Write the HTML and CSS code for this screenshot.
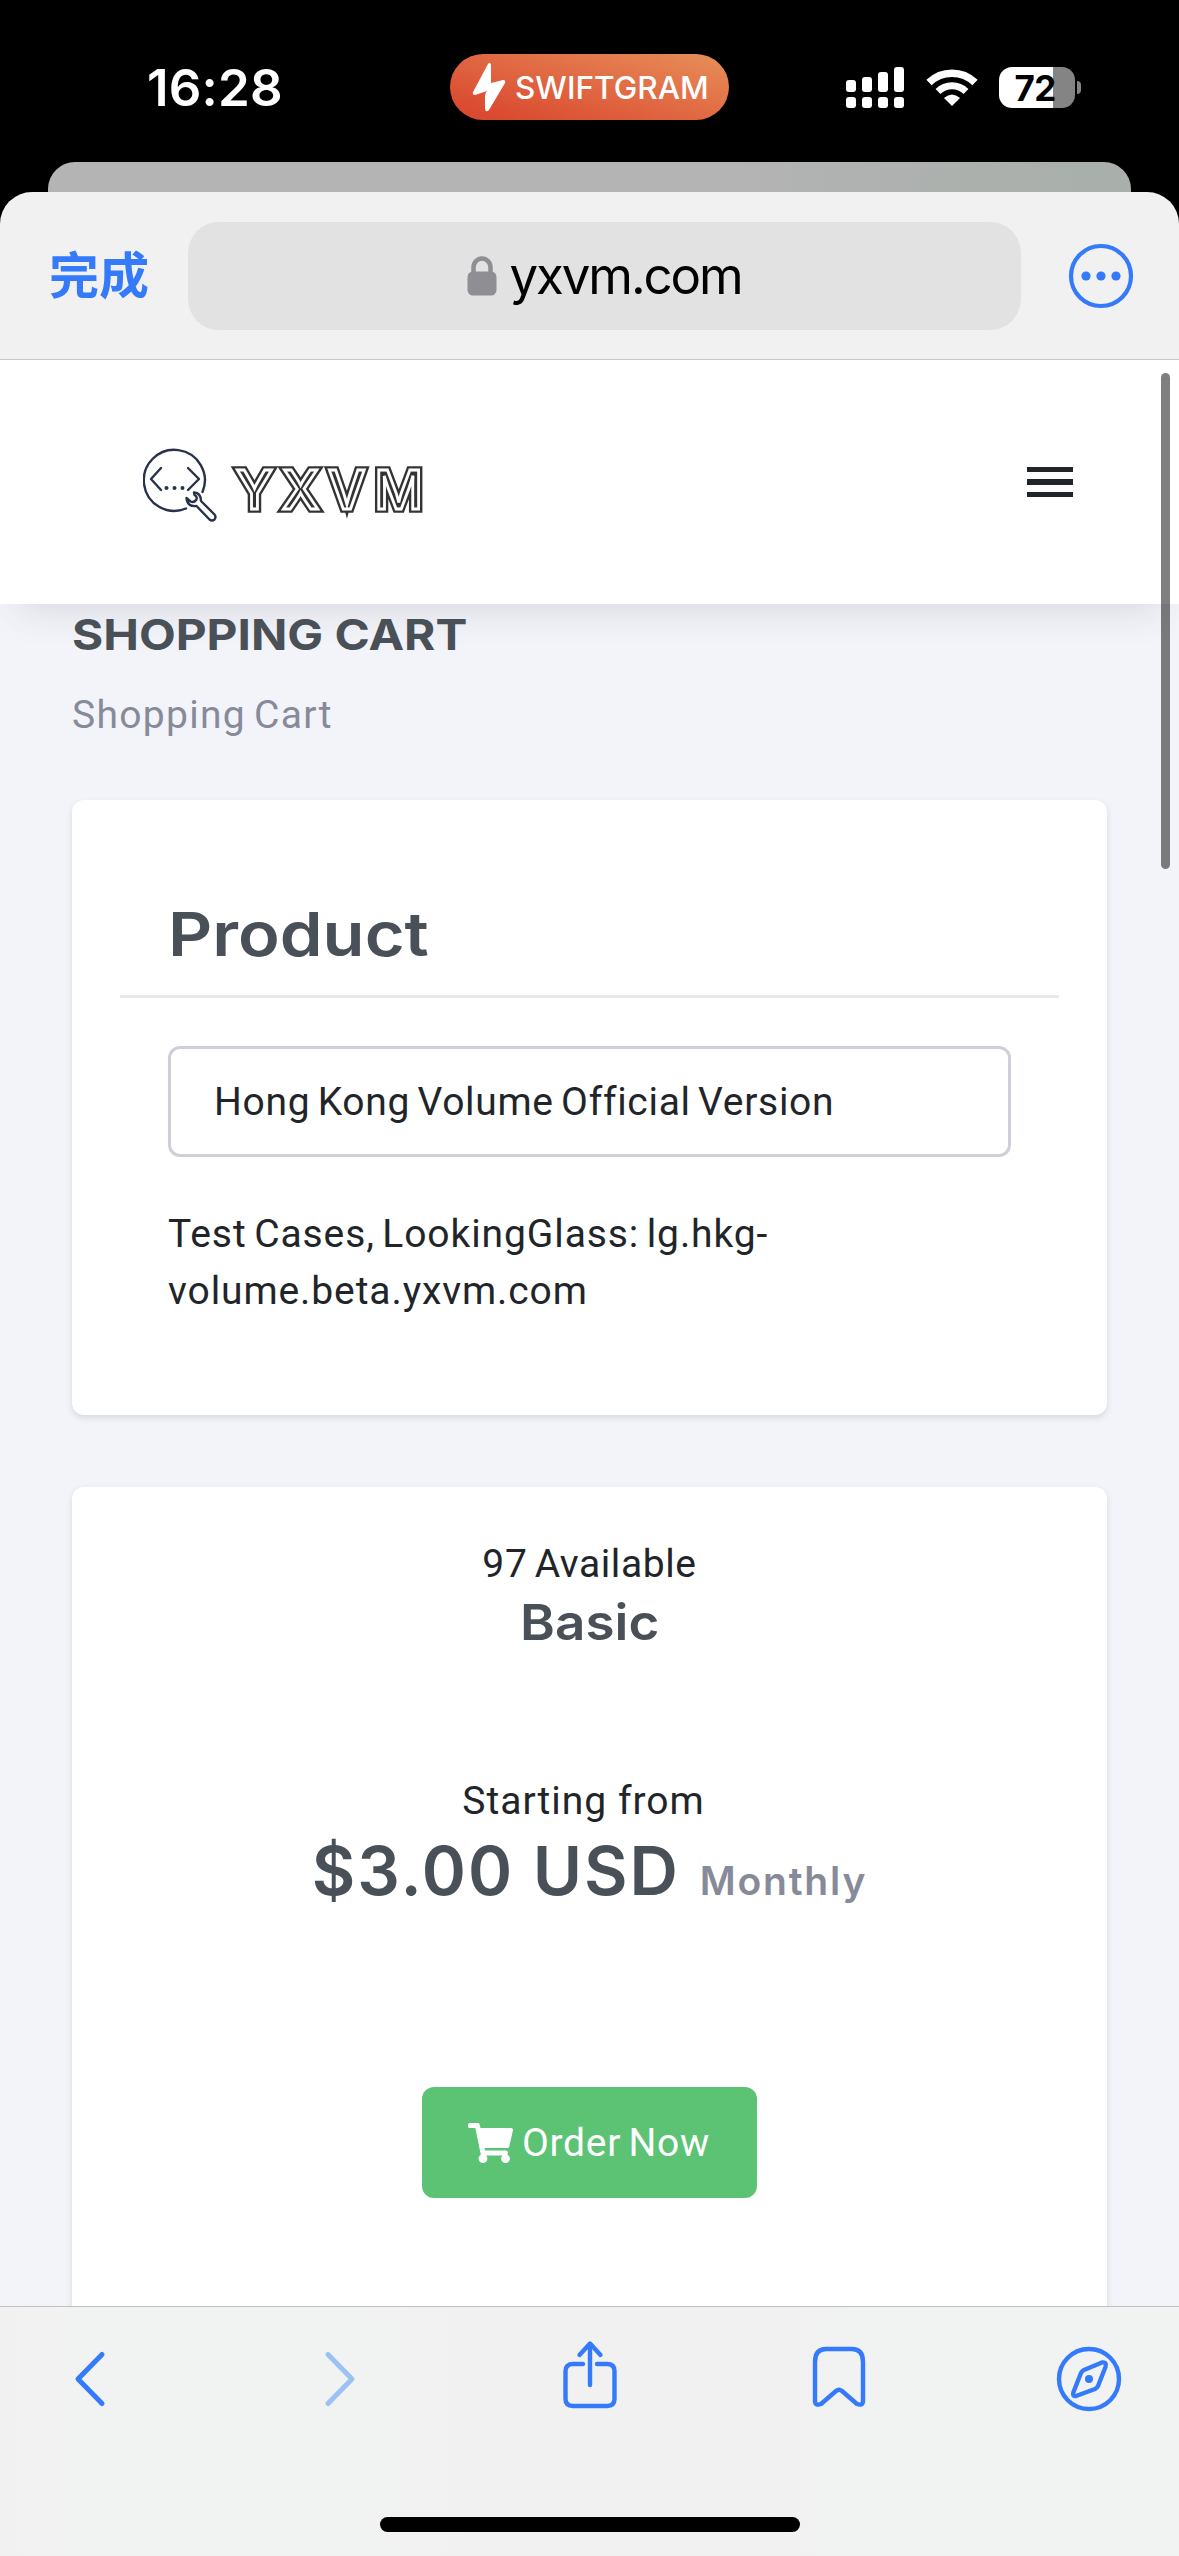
FILE: index.html
```
<!DOCTYPE html>
<html lang="zh-CN">
  <head>
    <meta charset="UTF-8">
    <title>Shopping Cart - YXVM</title>
    <link rel="stylesheet" href="styles.css">
  </head>
  <body>
    <div class="status">
      <div class="time">16:28</div>
      <div class="pill">
        <svg width="36" height="52" viewBox="0 0 36 52"><path d="M17 3L2 31Q1 34 4 34L16 30Q14 32 14 35L14 48Q15 52 18 49L34 22Q35 19 32 19L20 22L20 4Q19 0 17 3Z" fill="#fff"/></svg>
        <span>SWIFTGRAM</span>
      </div>
      <div class="status-icons">
        <svg class="signal" width="58" height="42" viewBox="0 0 58 42" fill="#fff">
          <rect x="0" y="13" width="10" height="12" rx="3"/>
          <rect x="16" y="10" width="10" height="15" rx="3"/>
          <rect x="32" y="5" width="10" height="20" rx="3"/>
          <rect x="48" y="0" width="10" height="25" rx="3"/>
          <rect x="0" y="30" width="10" height="11" rx="3"/>
          <rect x="16" y="30" width="10" height="11" rx="3"/>
          <rect x="32" y="30" width="10" height="11" rx="3"/>
          <rect x="48" y="30" width="10" height="11" rx="3"/>
        </svg>
        <svg class="wifi" width="52" height="38" viewBox="0 0 52 38">
          <path d="M3 13.5A33 33 0 0 1 49 13.5" fill="none" stroke="#fff" stroke-width="7.5"/>
          <path d="M12 22.5A20 20 0 0 1 40 22.5" fill="none" stroke="#fff" stroke-width="7"/>
          <path d="M26 37L18 29Q26 22 34 29Z" fill="#fff"/>
        </svg>
        <div class="battery"><span>72</span></div>
        <div class="battery-tip"></div>
      </div>
    </div>
    <div class="back-sheet"></div>

    <div class="sheet">
      <div class="browser-bar">
        <div class="done">完成</div>
        <div class="address">
          <svg width="30" height="40" viewBox="0 0 30 40"><path d="M6.500 19V11.500a8.500 9 0 0 1 17 0V19" fill="none" stroke="#8e8e93" stroke-width="4.500"/><rect x="0.500" y="15.500" width="29" height="24" rx="5.500" fill="#8e8e93"/></svg>
          <span>yxvm.com</span>
        </div>
        <svg class="more" width="66" height="66" viewBox="0 0 66 66"><circle cx="33" cy="33" r="30" fill="none" stroke="#347afa" stroke-width="4.200"/><g fill="#347afa"><circle cx="18" cy="33" r="4.600"/><circle cx="33" cy="33" r="4.600"/><circle cx="48" cy="33" r="4.600"/></g></svg>
      </div>

      <div class="page">
        <div class="topnav">
          <svg class="logo-icon" width="76" height="76" viewBox="0 0 76 76" fill="none" stroke="#28324a" stroke-width="2.400" stroke-linecap="round" stroke-linejoin="round">
            <path d="M43 61.500A30.500 30.500 0 1 1 59.500 45"/>
            <path d="M18 21L8 32L18 43M45 21L56 32L45 43"/>
            <g fill="#28324a" stroke="none"><circle cx="23.500" cy="41" r="2"/><circle cx="31.500" cy="41" r="2"/><circle cx="39.500" cy="41" r="2"/></g>
            <path d="M51 45.500Q58 46 58 54L71.500 67.500Q73.500 70 71.500 72.500Q69 74.500 66.500 72.500L53.500 59Q44 60 43.500 51L47.500 54.500Q51 56 53 53Q55 50 51.500 48Z"/>
          </svg>
          <div class="logo-text">YXVM</div>
          <div class="menu"><i></i><i></i><i></i></div>
        </div>

        <div class="content">
          <h1 class="title">SHOPPING CART</h1>
          <div class="crumb">Shopping Cart</div>

          <div class="card product">
            <div class="product-head"><h2>Product</h2></div>
            <div class="product-body">
              <div class="select">Hong Kong Volume Official Version</div>
              <p>Test Cases, LookingGlass: lg.hkg-<br>volume.beta.yxvm.com</p>
            </div>
          </div>

          <div class="card plan">
            <div class="stock">97 Available</div>
            <h3>Basic</h3>
            <div class="from">Starting from</div>
            <div class="price"><span class="amount">$3.00 USD</span><span class="cycle">Monthly</span></div>
            <div class="order">
              <svg width="45" height="40" viewBox="0 0 576 512"><path fill="#fff" d="M528.120 301.319l47.273-208C578.806 78.301 567.391 64 551.990 64H159.208l-9.166-44.810C147.758 8.021 137.930 0 126.529 0H24C10.745 0 0 10.745 0 24v16c0 13.255 10.745 24 24 24h69.883l70.248 343.435C147.325 417.100 136 435.222 136 456c0 30.928 25.072 56 56 56s56-25.072 56-56c0-15.674-6.447-29.835-16.824-40h209.647C430.447 426.165 424 440.326 424 456c0 30.928 25.072 56 56 56s56-25.072 56-56c0-22.172-12.888-41.332-31.579-50.405l5.517-24.276c3.413-15.018-8.002-29.319-23.403-29.319H218.117l-6.545-32h293.145c11.206 0 20.920-7.754 23.403-18.681z"/></svg>
              <span>Order Now</span>
            </div>
          </div>
        </div>
        <div class="scrollbar"></div>
      </div>

      <div class="toolbar">
        <div class="tools">
          <svg class="arrow" width="66" height="80" viewBox="0 0 66 80"><path d="M45 15.500L21 40L45 64.500"/></svg>
          <svg class="arrow disabled" width="66" height="80" viewBox="0 0 66 80"><path d="M21 15.500L45 40L21 64.500"/></svg>
          <svg width="66" height="80" viewBox="0 0 66 80"><path d="M26 25H16Q8.500 25 8.500 32V60Q8.500 67 16 67H50Q57.500 67 57.500 60V32Q57.500 25 50 25H40M33 46V5M22.500 16L33 4.500L43.500 16"/></svg>
          <svg width="66" height="80" viewBox="0 0 66 80"><path d="M9 23Q9 10 20 10H46Q57 10 57 23V62Q57 67 51 65L36 52Q33 49.500 30 52L15 65Q9 67 9 62Z"/></svg>
          <svg width="66" height="80" viewBox="0 0 66 80"><circle cx="33" cy="40" r="30"/><path d="M28 31L46 23.500Q51 22.500 49.500 28L42 47Q41 49 39 50L20 57Q16 57.500 17.500 53L25 34Q26 32 28 31Z"/><circle cx="33" cy="40" r="4" fill="#347afa" stroke="none"/></svg>
        </div>
        <div class="home-bar"></div>
      </div>
    </div>
  </body>
</html>
```
FILE: styles.css
```
* { box-sizing: border-box; }
body {
  margin: 0;
  width: 1179px;
  height: 2556px;
  overflow: hidden;
  background: #000;
  color: #212529;
  font-family: Roboto, "Liberation Sans", sans-serif;
  font-size: 39px;
}
h1, h2, h3, p { margin: 0; }
svg { display: block; flex: none; }

/* status bar */
.status {
  position: relative;
  height: 162px;
  font-family: Inter, "Liberation Sans", sans-serif;
  color: #fff;
}
.time {
  position: absolute;
  left: 147px;
  top: 58px;
  line-height: 60px;
  font-size: 51px;
  font-weight: 600;
  letter-spacing: 0.2px;
}
.pill {
  position: absolute;
  left: 450px;
  top: 54px;
  width: 279px;
  height: 66px;
  padding-left: 21px;
  display: flex;
  align-items: center;
  border-radius: 33px;
  background: linear-gradient(15deg, #da4930 10%, #e78b57 95%);
}
.pill span {
  margin-left: 8px;
  font-size: 31.5px;
  font-weight: 500;
}
.status-icons {
  position: absolute;
  left: 846px;
  top: 67px;
  height: 41px;
  display: flex;
  align-items: center;
}
.wifi { margin-left: 22px; }
.battery {
  width: 76px;
  height: 41px;
  margin-left: 21px;
  padding-right: 4px;
  border-radius: 13px;
  background: linear-gradient(90deg, #fff 54px, #848484 54px);
  color: #000;
  font-size: 35px;
  line-height: 42px;
  font-weight: 700;
  letter-spacing: -0.6px;
  text-align: center;
}
.battery-tip {
  width: 4px;
  height: 13px;
  margin-left: 2px;
  border-radius: 0 4px 4px 0;
  background: #848484;
}

.back-sheet {
  height: 30px;
  margin: 0 48px;
  border-radius: 27px 27px 0 0;
  background: linear-gradient(90deg, #b4b4b4 60%, #a9afab 95%);
}
.sheet {
  height: 2364px;
  display: flex;
  flex-direction: column;
  border-radius: 32px 32px 0 0;
  background: #f1f1f1;
  overflow: hidden;
}
.browser-bar {
  height: 168px;
  padding: 0 45px 0 49px;
  display: flex;
  align-items: center;
  border-bottom: 1px solid #c5c5ca;
}
.done {
  width: 139px;
  font-family: Inter, "Noto Sans CJK SC", sans-serif;
  font-size: 50px;
  line-height: 60px;
  font-weight: 700;
  color: #347afa;
}
.address {
  width: 833px;
  height: 108px;
  display: flex;
  align-items: center;
  justify-content: center;
  gap: 12px;
  border-radius: 31px;
  background: #e2e2e2;
  color: #000;
  font-family: Inter, "Liberation Sans", sans-serif;
  font-size: 51px;
  letter-spacing: -2.1px;
}
.more { margin-left: 47px; }

/* shop page */
.page {
  position: relative;
  height: 1946px;
  background: #f3f4f9;
  overflow: hidden;
}
.topnav {
  position: relative;
  height: 244px;
  padding: 0 106px 0 143px;
  display: flex;
  align-items: center;
  background: #fff;
  box-shadow: 0 24px 36px -18px rgba(60,65,75,0.14);
}
.logo-icon { margin-top: 5px; }
/* inline lettering: dark outline, white band, dark core */
.logo-text {
  position: relative;
  margin: 15px 0 0 17px;
  font-family: Inter, sans-serif;
  font-size: 53px;
  line-height: 70px;
  font-weight: 500;
  color: #333;
  letter-spacing: 9px;
  -webkit-text-stroke: 7.6px #333;
}
.logo-text::after {
  content: "YXVM";
  position: absolute;
  left: 0;
  top: 0;
  -webkit-text-stroke: 2.8px #fff;
}
.menu {
  margin-left: auto;
  display: grid;
  gap: 7px;
}
.menu i {
  width: 46px;
  height: 5.5px;
  background: #212529;
}
.content { padding: 0 72px; }
.title {
  padding-top: 6px;
  font-family: Inter, sans-serif;
  font-size: 43px;
  line-height: 49px;
  font-weight: 700;
  color: #495057;
  transform: scaleX(1.11);
  transform-origin: left;
}
.crumb {
  padding-top: 28px;
  line-height: 57px;
  color: #878a99;
  letter-spacing: 1.3px;
  word-spacing: -3px;
}
.card {
  border-radius: 12px;
  background: #fff;
  box-shadow: 0 3px 6px rgba(56,65,74,0.15);
}
.product {
  height: 615px;
  margin-top: 56px;
  padding: 48px;
}
.product-head {
  height: 150px;
  padding: 50px 48px 0;
  border-bottom: 3px solid #e9e9e9;
}
.product h2 {
  font-family: Inter, sans-serif;
  font-size: 61px;
  line-height: 72px;
  font-weight: 600;
  color: #495057;
  transform: scaleX(1.125);
  transform-origin: left;
}
.product-body { padding: 48px; }
.select {
  height: 111px;
  padding: 0 43px;
  border: 3px solid #ced0d9;
  border-radius: 12px;
  line-height: 107px;
  letter-spacing: 0.7px;
  word-spacing: -3px;
}
.product p {
  padding-top: 49px;
  line-height: 57px;
  letter-spacing: 0.9px;
  word-spacing: -3px;
}
.plan {
  height: 900px;
  margin-top: 72px;
  padding-top: 49px;
  display: flex;
  flex-direction: column;
  align-items: center;
}
.stock {
  line-height: 57px;
  letter-spacing: 0.6px;
  word-spacing: -3px;
}
.plan h3 {
  margin-top: -1px;
  font-family: Inter, sans-serif;
  font-size: 50px;
  line-height: 60px;
  font-weight: 600;
  color: #495057;
  transform: scaleX(1.06);
}
.from {
  padding: 121px 12px 0 0;
  line-height: 57px;
  letter-spacing: 1px;
}
.price {
  margin-top: -1px;
  display: flex;
  align-items: baseline;
  gap: 20px;
  line-height: 84px;
  font-family: Inter, sans-serif;
  font-weight: 600;
}
.amount { font-size: 67px; color: #495057; letter-spacing: 1.9px; }
.cycle { font-size: 39px; color: #878a99; letter-spacing: 1.8px; }
.order {
  width: 335px;
  height: 111px;
  margin-top: 164px;
  padding-left: 46px;
  display: flex;
  align-items: center;
  border-radius: 12px;
  background: #5cc374;
  color: #fff;
}
.order span {
  margin-left: 9px;
  letter-spacing: 0.7px;
  word-spacing: -3px;
}
.scrollbar {
  position: absolute;
  top: 13px;
  right: 9px;
  width: 9px;
  height: 496px;
  border-radius: 5px;
  background: rgba(0,0,0,0.5);
}

/* bottom bar */
.toolbar {
  height: 250px;
  border-top: 1px solid #bfbfc1;
  background: linear-gradient(90deg, #f1f1f1, #f1f3f2 10%, #f1f3f2 25%, #f1f1f1 40%, #f1f1f1 65%, #f1f3f3 85%);
}
.tools {
  padding: 32px 57px 0;
  display: flex;
  justify-content: space-between;
  fill: none;
  stroke: #347afa;
  stroke-width: 4.4;
  stroke-linecap: round;
  stroke-linejoin: round;
}
.arrow { stroke-width: 5; }
.disabled { stroke: #9cc2f5; }
.home-bar {
  width: 420px;
  height: 15px;
  margin: 98px auto 0;
  border-radius: 8px;
  background: #000;
}
```
